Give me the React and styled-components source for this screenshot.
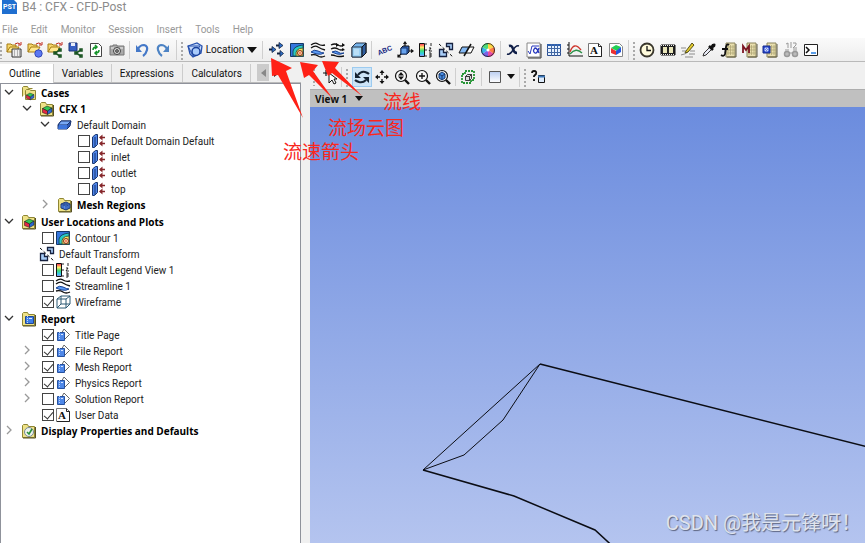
import React, {useState} from 'react';
import styled, {createGlobalStyle} from 'styled-components';

const GlobalStyle = createGlobalStyle`
    * { box-sizing: border-box; }
    html, body, #root { height: 100%; }
    body {
        margin: 0;
        overflow: hidden;
        background: #f0f0f0;
        color: #111;
        font-family: Roboto, "Noto Sans CJK SC", sans-serif;
        font-size: 10px;
    }
    button {
        border: 0;
        padding: 0;
        background: none;
        font: inherit;
        color: inherit;
    }
`;

const Window = styled.div`
    position: relative;
    display: flex;
    flex-direction: column;
    height: 100%;
    overflow: hidden;
`;
const TitleBar = styled.header`
    display: flex;
    align-items: center;
    gap: 5px;
    height: 20px;
    padding: 0 2px 6px;
    background: #fff;
`;
const Title = styled.h1`
    margin: 0;
    font: 400 12px/14px Roboto, sans-serif;
    color: #8c8c8c;
`;
const Menu = styled.nav`
    display: flex;
    gap: 13px;
    height: 18px;
    padding: 0 2px;
    background: #fff;
    color: #999;
`;
const Toolbar = styled.div`
    display: flex;
    align-items: center;
    height: 24px;
    background: linear-gradient(#fafafa, #ededed);
    border-bottom: 1px solid #b9b9b9;
`;
const ViewToolbar = styled(Toolbar)`
    height: 25px;
    padding-left: 3px;
    background: #f0f0f0;
    border: 0;
`;
const Handle = styled.span`
    width: 6px;
    height: 18px;
    flex: none;
    background: radial-gradient(circle at 1px 1px, #aaa 1px, transparent 1px) 0 1px / 3px 4px repeat-y;
`;
const ViewHandle = styled(Handle)`
    width: 10px;
`;
const EdgeHandle = styled(Handle)`
    width: 11px;
    height: 20px;
    margin-left: ${p => p.$gap}px;
    border-left: 1px solid #cfcfcf;
    background-position: 4px 2px;
`;
const Separator = styled.span`
    width: 1px;
    height: 18px;
    margin: 0 ${p => p.$gap || 4}px;
    flex: none;
    background: #cfcfcf;
`;
const Tools = styled.div`
    display: flex;
    justify-content: space-between;
    width: ${p => p.$width}px;
    flex: none;
`;
const Tool = styled.button`
    display: grid;
    place-items: center;
    width: 16px;
    height: 16px;
`;
const ActiveTool = styled(Tool)`
    width: 20px;
    height: 20px;
    margin-right: 2px;
    background: #cce4f7;
    outline: 1px solid #9ccbf0;
    outline-offset: -1px;
`;
const DropButton = styled.button`
    display: flex;
    align-items: center;
    justify-content: space-between;
    width: ${p => p.$width}px;
    height: 20px;
`;
const Caret = styled.span`
    border: solid transparent;
    border-width: ${p => p.$small ? '5px 4px 0' : '6px 5px 0'};
    border-top-color: #111;
`;
const Body = styled.div`
    display: grid;
    grid-template-columns: 301px minmax(0, 1fr);
    column-gap: 9px;
    flex: 1;
    min-height: 0;
    padding-top: 2px;
`;
const SidePanel = styled.aside`
    display: flex;
    flex-direction: column;
    min-height: 0;
`;
const Tabs = styled.div`
    display: flex;
    height: 19px;
    border-bottom: 1px solid #bbb;
`;
const Tab = styled.button`
    height: ${p => p.$active ? 19 : 18}px;
    flex: ${p => p.$grow} 0 0;
    background: ${p => p.$active ? '#fff' : '#efefef'};
    border-right: 1px solid #ccc;
    text-align: center;
    white-space: nowrap;
    padding-right: ${p => p.$active ? 4 : 0}px;
`;
const TabScroll = styled.button`
    display: grid;
    align-items: center;
    justify-content: ${p => p.$left ? 'center' : 'start'};
    width: ${p => p.$left ? 12 : 32}px;
    height: 17px;
    margin-left: ${p => p.$left ? 6 : 0}px;
    padding-left: ${p => p.$left ? 0 : 5}px;
    background: ${p => p.$left ? '#cbcbcb' : 'none'};
`;
const Tree = styled.div`
    display: flex;
    flex-direction: column;
    gap: 1px;
    flex: 1;
    padding-top: 1px;
    background: #fff;
    border: solid #8f929b;
    border-width: 1px 1px 0;
`;
const Row = styled.div`
    display: flex;
    align-items: center;
    height: 16px;
    padding-left: ${p => p.$level * 18}px;
    font-weight: ${p => p.$bold ? 700 : 400};
    font-family: ${p => p.$bold ? '"Open Sans", sans-serif' : 'inherit'};
    color: ${p => p.$bold ? '#000' : '#222'};
`;
const Twist = styled.button`
    display: grid;
    place-items: center;
    width: 20px;
    height: 16px;
    padding: 0 4px 2px 0;
`;
const NoTwist = styled.span`
    width: 20px;
`;
const Check = styled.input`
    appearance: none;
    display: grid;
    place-items: center;
    width: 12px;
    height: 12px;
    margin: 0 1px 0 3px;
    border: 1px solid #444;
    background: #fff;
    &:checked::after {
        content: "";
        width: 4px;
        height: 8px;
        margin-bottom: 2px;
        border: solid #333;
        border-width: 0 1px 1px 0;
        transform: rotate(40deg);
    }
`;
const Label = styled.label`
    display: flex;
    align-items: center;
    gap: 4px;
    white-space: nowrap;
`;
const ViewPanel = styled.main`
    display: flex;
    flex-direction: column;
    min-width: 0;
    min-height: 0;
`;
const ViewBar = styled.div`
    display: flex;
    align-items: center;
    height: 18px;
    padding-left: 5px;
    background: #c0c0c0;
    border-top: 1px solid #adadad;
`;
const ViewName = styled.button`
    display: flex;
    align-items: center;
    gap: 8px;
    font-weight: 700;
    font-family: "Open Sans", sans-serif;
`;
const Viewport = styled.div`
    flex: 1;
    min-height: 0;
    background: linear-gradient(#6b8cde, #b4c4ef);
`;
const Scene = styled.svg`
    display: block;
    width: 100%;
    height: 100%;
`;
const Arrows = styled.svg`
    position: absolute;
    left: 270px;
    top: 56px;
    pointer-events: none;
`;
const Note = styled.span`
    position: absolute;
    left: ${p => p.$x}px;
    top: ${p => p.$y}px;
    font: 19px/24px "Noto Sans CJK SC", sans-serif;
    color: #f8281e;
    white-space: nowrap;
`;
const Watermark = styled.span`
    position: absolute;
    right: 4px;
    bottom: 8px;
    font: 20px/24px Roboto, "Noto Sans CJK SC", sans-serif;
    color: #dfe3ec;
    text-shadow: 1px 1px 1px #5d6580;
    white-space: nowrap;
`;

const Icon = ({children}) => (
    <svg width="16" height="16" viewBox="0 0 16 16" overflow="visible" fill="none" stroke="#111" aria-hidden="true">{children}</svg>
);

// shared pieces
const openFolder = (
    <>
        <path d="M1 10V2h4l1 1h4v3" fill="#f5d76c" stroke="#a57b13" />
        <path d="M1 10l3-5h9l-3 5z" fill="#ffe88d" stroke="#a57b13" />
        <path d="M9 2q3-2 5 0M15 0v3h-3" stroke="#c0261c" />
    </>
);
const share = <path d="M8 11l5-3M8 11l5 3M7 10h2v2H7zM12 7h2v2h-2zM12 13h2v2h-2z" stroke="#17521f" strokeWidth="1.5" />;
const folder = (
    <>
        <path d="M1.5 14.5v-12l1-1h4l1 2h6v11z" fill="#eee287" stroke="#8f8634" />
        <path d="M2 15h12.5V4" stroke="#565023" />
    </>
);
const cube = (
    <g strokeWidth=".5">
        <path d="M3.5 7.5L8 5l5 2-4.5 3z" fill="#33c653" />
        <path d="M3.5 7.5v4l5 2V10z" fill="#e32844" />
        <path d="M8.5 10L13 7v4l-4.5 2.5z" fill="#2c66d0" />
    </g>
);
const calc = (
    <>
        <path d="M5 1h9v14H5z" fill="#e9dfae" stroke="#8b845c" />
        <path d="M7 3v10M9.5 3v10M12 3v10M6 5h8M6 8h8M6 11h8" stroke="#aaa070" strokeWidth=".7" />
        <path d="M15 2v13H6" stroke="#5d583e" />
    </>
);
const streams = (
    <>
        <path d="M1 3q4-3 7-1t7 1M1 6q4-3 7-1t7 3M1 13q4-1 7 1t7 0" strokeWidth="1.3" />
        <path d="M1 10q3-3 7-1t6 2q-3 2-7 1T1 10z" fill="#5b9bf5" stroke="#174090" />
    </>
);
const magnifier = (
    <>
        <circle cx="7" cy="7" r="5.5" fill="#f7f7f7" strokeWidth="1.2" />
        <path d="M11 11l4 4" strokeWidth="2.4" />
    </>
);

const icons = {
    loadCase: <>{openFolder}<path d="M6 7h9v8H6z" fill="#eee" stroke="#333" /><path d="M8 9h1M11 9h1M13 9h1M8 11h1M11 11h1M13 11h1M8 13h1M11 13h1M13 13h1" stroke="#777" /></>,
    loadResults: <>{openFolder}<circle cx="11.5" cy="11.5" r="3.7" fill="#5b78f2" stroke="#3348b5" /></>,
    loadState: <>{openFolder}{share}</>,
    saveState: <><path d="M1 1h8v8H1z" fill="#375fc4" stroke="#1d3576" /><path d="M3 1h4v3H3z" fill="#e7edfa" stroke="none" />{share}</>,
    refresh: <><path d="M2.5 1.5h8l3 3v10h-11z" fill="#fff" stroke="#444" /><path d="M5 8q0-3 3-3M7 3l2 2-2 2M11 8q0 3-3 3M9 9l-2 2 2 2" stroke="#159329" strokeWidth="1.5" /></>,
    camera: <><path d="M1 4h3V3h4v1h7v9H1z" fill="#aaa" stroke="#777" /><path d="M2 6h3M11 6h3" stroke="#eee" /><circle cx="8" cy="9" r="3.5" fill="#ddd" stroke="#444" /><circle cx="8" cy="9" r="1.5" fill="#777" stroke="#555" /></>,
    undo: <><path d="M4 7q2-4 6-4 4 1 3 5-1 4-4 6" stroke="#4478c8" strokeWidth="2.2" /><path d="M2 3v7h6z" fill="#4478c8" stroke="none" /></>,
    redo: <><path d="M12 7q-2-4-6-4-4 1-3 5 1 4 4 6" stroke="#4d83c4" strokeWidth="2.2" /><path d="M14 3v7H8z" fill="#4d83c4" stroke="none" /></>,
    location: <><path d="M1 4l9-3 5 3-1 7-8 4-3-3z" fill="#c4d9fb" stroke="#2852ae" strokeWidth="1.3" /><path d="M1 4h12l-7 10z" stroke="#2852ae" /><circle cx="9" cy="9.5" r="4" fill="#a9cbfb" stroke="#173f9b" strokeWidth="1.5" /></>,
    vector: <><path d="M1 7.5h4M8 3.5h4M9 11.5h4" stroke="#12223f" strokeWidth="2" /><path d="M4 4.5l4 3-4 3zM11 .5l4 3-4 3zM12 8.5l3.5 3-3.5 3z" fill="#2f6fc9" stroke="#12223f" strokeWidth=".8" /></>,
    contour: <><path d="M1.5 1.5h13v13h-13z" fill="#3577df" stroke="#153765" /><path d="M4 14V9q1-5 10-6v11z" fill="#26cac3" stroke="#164c63" /><path d="M7 14q-1-8 7-8v8z" fill="#f4e45f" stroke="#49623c" /><circle cx="11" cy="11" r="2.5" fill="#ffe0a5" stroke="#8b2b1e" /><circle cx="11" cy="11" r=".8" fill="#e12" stroke="none" /></>,
    streamline: streams,
    particle: <><path d="M1 3q4-2 7 0t6 0M1 7q4-2 7 0t6 0M1 13q3 0 5 1t8 0" strokeWidth="1.3" /><path d="M2 10q4-2 6 0t6 1q-4 2-7 1T2 10z" fill="#5b9bf5" stroke="#174090" /><path d="M12 1l3 2-3 2zM6 1l3 2-3 2zM12 6l3 2-3 1z" fill="#111" stroke="none" /></>,
    volume: <><path d="M1 5l4-4h10v10l-4 4H1z" fill="#77b5ec" stroke="#273449" /><path d="M1 5h10v10H1z" fill="#9bd0f4" stroke="#273449" /><path d="M11 5l4-4v10l-4 4z" fill="#315f9f" /><path d="M3 7h5v6H3z" fill="#badff7" stroke="none" /></>,
    text: <text x="1" y="11" transform="rotate(-22 8 8)" fontSize="7" fontWeight="700" fontFamily="Liberation Sans" fill="#182a84" stroke="none">ABC</text>,
    axes: <><path d="M8 5V0M11 9h5M5 11l-4 4M6.5 2L8 0l1.5 2M14 7.5L16 9l-2 1.5M1 12.5V15h3" strokeWidth="1.2" /><path d="M4 6l2-2h6v6l-2 2H4z" fill="#2d62bc" /><path d="M4 6h6v6H4z" fill="#67a2ed" stroke="#15356d" /></>,
    legend: <><defs><linearGradient id="rainbow" x2="0" y2="1"><stop stopColor="#f25" /><stop offset=".3" stopColor="#fe6" /><stop offset=".55" stopColor="#3ed875" /><stop offset=".8" stopColor="#31c9ee" /><stop offset="1" stopColor="#a8e" /></linearGradient></defs><path d="M1.5 1.5h5v13h-5z" fill="url(#rainbow)" /><path d="M7 2h2M7 8h2M7 14h2M13 1v3M11 6h2l-2 3h3M11 11h2v2h-2M13 13v2h-2" strokeWidth=".9" /></>,
    transform: <><path d="M1.5 7.5h4v3h3v4h-7z" fill="#a8cdf7" stroke="#17213f" strokeWidth="1.3" /><path d="M8.5 1.5h6v6h-3v-3h-3z" fill="#a8cdf7" stroke="#17213f" strokeWidth="1.3" /><path d="M1 2l14 13" strokeDasharray="3 2" /></>,
    clip: <><path d="M3 5h7l-3 6H0z" fill="#83b8f4" /><path d="M10 5h5l-3 6H7" fill="#fff" /><path d="M5 14l7-12" strokeWidth="1.5" /></>,
    color: <><g stroke="none"><path d="M8 8V1a7 7 0 0 1 6 4z" fill="#ffd743" /><path d="M8 8l6-3a7 7 0 0 1 0 7z" fill="#fb7a46" /><path d="M8 8l6 4a7 7 0 0 1-6 3z" fill="#e74aa5" /><path d="M8 8v7a7 7 0 0 1-6-3z" fill="#7863e6" /><path d="M8 8l-6 4a7 7 0 0 1 0-7z" fill="#38b5ec" /><path d="M8 8L2 5a7 7 0 0 1 6-4z" fill="#4edb78" /></g><circle cx="8" cy="8" r="6.5" strokeWidth=".8" /><circle cx="8" cy="8" r="1.5" fill="#fff" stroke="none" /></>,
    variable: <><path d="M4 4q3-1 4 3t4 4" stroke="#101f48" strokeWidth="2.5" /><path d="M14 4q-3-1-6 4t-6 4" stroke="#101f48" strokeWidth="1.5" /></>,
    expression: <><path d="M1 1h13v14H1z" fill="#fff" stroke="#888" /><path d="M15 2v14H2" stroke="#333" /><path d="M2 9l2 3 2-8h7" stroke="#2737bd" /><path d="M13 6q-2 6-4 5-3-2 0-5 2 0 4 5" stroke="#2737bd" strokeWidth="1.3" /></>,
    table: <><path d="M1.5 2.5h13v11h-13z" fill="#e7f2ff" stroke="#2b4d91" /><path d="M1 3h14" stroke="#2b5faf" strokeWidth="2" /><path d="M5.5 2v12M8.5 2v12M11.5 2v12M1 6.5h14M1 10.5h14" stroke="#4268a4" /></>,
    chart: <><path d="M2 0v14h14M0 3h2M0 7h2M0 11h2" /><path d="M3 10q4-11 11-2" stroke="#ce352b" strokeWidth="1.3" /><path d="M3 12q6-7 12-1" stroke="#2b9148" strokeWidth="1.3" /></>,
    comment: <><path d="M1.5 1.5h10l3 3v10h-13z" fill="#fff" stroke="#777" /><path d="M11.5 1.5v3h3v10H2" stroke="#222" /><text x="3" y="12" fontSize="11" fontWeight="700" fontFamily="Liberation Serif" fill="#111" stroke="none">A</text></>,
    figure: <><path d="M1.5 1.5h10l3 3v10h-13z" fill="#fff" stroke="#888" /><path d="M3 6l5-3 5 2-4 4z" fill="#20cf54" stroke="none" /><path d="M3 6l5 3v4l-5-2z" fill="#ea3030" stroke="none" /><path d="M8 9l5-4v5l-5 3z" fill="#2554dd" stroke="none" /></>,
    clock: <><circle cx="8" cy="8" r="6.5" fill="#fffbdc" stroke="#39362c" strokeWidth="1.8" /><path d="M8 4v4.5h4" strokeWidth="1.3" /></>,
    film: <><path d="M1 3h14v10H1z" fill="#222" /><path d="M3 5h4v6H3zM9 5h4v6H9z" fill="#e9e6ba" stroke="none" /><path d="M1 3.5h14M1 12.5h14" stroke="#eee" strokeDasharray="1 1" /></>,
    quick: <><path d="M1 13q5-1 7-3M5 15h8M9 12h6M10 9h5M2 9h4M1 6h5" stroke="#8b8b8b" /><path d="M6 9l6-8 2 2-6 7-3 1z" fill="#e5cc2d" stroke="#565118" /></>,
    probe: <><path d="M2 14l1-3 6-6 2 2-6 6z" fill="#e8eaf5" stroke="#333" /><path d="M8 4l4 4M10 6l2-3q2-1 1 1z" stroke="#111" strokeWidth="2.5" /></>,
    func: <>{calc}<path d="M8 3Q6 1 5 5L4 12q-1 3-4 1M1 7h6" strokeWidth="1.8" /></>,
    macro: <>{calc}<path d="M1 11V4l3 4 3-4v7" stroke="#7c1523" strokeWidth="1.8" /></>,
    mesh: <>{calc}<path d="M1 4h7v7H1z" fill="#2748ce" stroke="#172b8b" /><path d="M3 6h3v3H3zM3 6l3 3M6 6L3 9" stroke="#dbe5ff" strokeWidth=".8" /></>,
    compare: <g stroke="#999"><path d="M3 2l2-1v5M10 1h3v2l-3 3h4M8 0v6" /><circle cx="4" cy="12" r="2.5" fill="#bbb" strokeWidth="1.5" /><circle cx="12" cy="12" r="2.5" fill="#bbb" strokeWidth="1.5" /><path d="M2 8h4M10 8h4M6 11h4" /></g>,
    command: <><path d="M1.5 2.5h13v11h-13z" fill="#fff" stroke="#222" /><path d="M3 5l3 3-3 3" strokeWidth="1.5" /><path d="M8 11h5" stroke="#247ee0" strokeWidth="1.5" /></>,
    pick: <><path d="M0 4h6M3 1v6" strokeWidth="1.2" /><path d="M6 4v10l3-3 2 4 2-1-2-4h3z" fill="#fff" /></>,
    rotate: <><path d="M4 6q3-4 7-3 3 1 4 2M12 11q-3 3-7 2-3-1-4-2" stroke="#152332" strokeWidth="2" /><path d="M1 3v6h6zM15 14V8H9z" fill="#152332" stroke="none" /></>,
    pan: <><path d="M8 3v3M8 10v3M3 8h3M10 8h3" strokeWidth="1.3" /><path d="M5.5 4L8 1l2.5 3zM5.5 12L8 15l2.5-3zM4 5.5L1 8l3 2.5zM12 5.5L15 8l-3 2.5z" fill="#111" stroke="none" /></>,
    zoom: <>{magnifier}<path d="M4 6.5L7 3l3 3.5zM4 7.5L7 11l3-3.5z" fill="#111" stroke="none" /></>,
    zoomBox: <>{magnifier}<path d="M4 7h6M7 4v6" strokeWidth="1.3" /></>,
    fit: <>{magnifier}<path d="M4 5l3-2 3 2v4l-3 2-3-2z" fill="#458be1" stroke="#17386e" /><path d="M4 5l3 2 3-2M7 7v4" stroke="#17386e" /></>,
    highlight: <><path d="M2 5h3V2h9v9h-3v3H2z" stroke="#259535" strokeWidth="1.8" strokeDasharray="2 1" /><path d="M5.5 7.5l2-2h4v4l-2 2h-4zM5.5 7.5h4v4M9.5 7.5l2-2" fill="#ddd" strokeWidth=".8" /></>,
    background: <><defs><linearGradient id="sheet" x2="0" y2="1"><stop stopColor="#b9cdf1" /><stop offset="1" stopColor="#fff" /></linearGradient></defs><path d="M2.5 2.5h11v11h-11z" fill="url(#sheet)" stroke="#555" /></>,
    help: <><path d="M2 4q0-2 2-2 3 0 2 3L4 7v1M4 10v2" strokeWidth="1.8" /><path d="M8.5 6.5h6v7h-6z" fill="#dceafa" /><path d="M8 7.5h7" stroke="#3b75b7" strokeWidth="2" /></>,
    folderStack: <><path d="M1.5 11.5v-9l1-1h4l1 2h4" fill="#eee287" stroke="#8f8634" /><path d="M4.5 14.5v-9l1-1h3l1 1h5v9z" fill="#eee287" stroke="#8f8634" /><g transform="translate(2.5 4) scale(.8)">{cube}</g></>,
    folderCube: <>{folder}{cube}</>,
    folderMesh: <>{folder}<path d="M4 7l5-2 4 2v4l-4 2-5-2z" fill="#5187e5" stroke="#1c3774" /><path d="M4 7l5 2 4-2M9 9v4M6 6l5 2v4M11 6L6 8v4" stroke="#1c3774" strokeWidth=".6" /></>,
    folderReport: <>{folder}<path d="M4.5 5.5h8v7h-8z" fill="#3d7ee8" stroke="#1e4696" /><path d="M6.5 5v7" stroke="#cde" strokeDasharray="1 1" /><path d="M8 7.5h3" stroke="#d9e8ff" /></>,
    folderCheck: <>{folder}<circle cx="8" cy="9" r="4.5" fill="#edf3ed" stroke="#789" /><path d="M6 9l2 2 3-5" stroke="#28903a" strokeWidth="1.6" /></>,
    domain: <><path d="M1 8l3-4h10l-1 5-3 3H1z" fill="#2d5ab8" stroke="#1a3471" /><path d="M1 8l3-4h10l-4 4z" fill="#78a8f4" stroke="#1a3471" /><path d="M2 8h8v4H1z" fill="#3e76dd" stroke="none" /></>,
    boundary: <><path d="M1.5 4l3-2.5h2v10l-3 3h-2z" fill="#4d84ea" stroke="#19366f" /><path d="M4 4v10" stroke="#19366f" /><path d="M9 4.5h5M9 10.5h5" stroke="#86262a" strokeWidth="1.3" /><path d="M8 4.5L11.5 1.5v6zM8 10.5l3.5-3v6z" fill="#86262a" stroke="none" /></>,
    wireframe: <path d="M2 5l4-3h9v8l-4 4H2zM2 5h9v9M11 5l4-3M6 2v8h9M6 10l-4 4" stroke="#2c5b74" />,
    page: <><path d="M9 2l5.5 5.5L9 13 5 9z" fill="#fff" stroke="#666" /><path d="M2.5 5.5h7v8h-7z" fill="#4f88e8" stroke="#26519f" /><path d="M4.5 5v8" stroke="#b9d2fa" strokeDasharray="1 1" /><path d="M6 7.5h2" stroke="#d9e8ff" /></>,
};

const ToolGroup = ({names, width}) => (
    <Tools $width={width}>
        {names.map(name => (
            <Tool key={name} type="button" aria-label={name}><Icon>{icons[name]}</Icon></Tool>
        ))}
    </Tools>
);

const sections = [
    [
        {level: 0, twist: 'open', icon: 'folderStack', text: 'Cases', bold: true},
        {level: 1, twist: 'open', icon: 'folderCube', text: 'CFX 1', bold: true},
        {level: 2, twist: 'open', icon: 'domain', text: 'Default Domain'},
        {level: 3, check: false, icon: 'boundary', text: 'Default Domain Default'},
        {level: 3, check: false, icon: 'boundary', text: 'inlet'},
        {level: 3, check: false, icon: 'boundary', text: 'outlet'},
        {level: 3, check: false, icon: 'boundary', text: 'top'},
        {level: 2, twist: 'closed', icon: 'folderMesh', text: 'Mesh Regions', bold: true},
    ],
    [
        {level: 0, twist: 'open', icon: 'folderCube', text: 'User Locations and Plots', bold: true},
        {level: 1, check: false, icon: 'contour', text: 'Contour 1'},
        {level: 1, icon: 'transform', text: 'Default Transform'},
        {level: 1, check: false, icon: 'legend', text: 'Default Legend View 1'},
        {level: 1, check: false, icon: 'streamline', text: 'Streamline 1'},
        {level: 1, check: true, icon: 'wireframe', text: 'Wireframe'},
    ],
    [
        {level: 0, twist: 'open', icon: 'folderReport', text: 'Report', bold: true},
        {level: 1, check: true, icon: 'page', text: 'Title Page'},
        {level: 1, twist: 'closed', check: true, icon: 'page', text: 'File Report'},
        {level: 1, twist: 'closed', check: true, icon: 'page', text: 'Mesh Report'},
        {level: 1, twist: 'closed', check: true, icon: 'page', text: 'Physics Report'},
        {level: 1, twist: 'closed', check: false, icon: 'page', text: 'Solution Report'},
        {level: 1, check: true, icon: 'comment', text: 'User Data'},
        {level: 0, twist: 'closed', icon: 'folderCheck', text: 'Display Properties and Defaults', bold: true},
    ],
];

const TreeRow = ({item}) => {
    const {level, twist, check, icon, text, bold} = item;
    const [checked, setChecked] = useState(check);
    const id = 'node-' + text.replace(/ /g, '-');
    const content = <><Icon>{icons[icon]}</Icon>{text}</>;
    return (
        <Row $level={level} $bold={bold}>
            {twist ? (
                <Twist type="button" aria-label={text} aria-expanded={twist === 'open'}>
                    <svg width="10" height="10" viewBox="0 0 10 10" fill="none" stroke={twist === 'open' ? '#333' : '#999'} strokeWidth="1.3">
                        <path d={twist === 'open' ? 'M1 3l4 4 4-4' : 'M3 1l4 4-4 4'} />
                    </svg>
                </Twist>
            ) : <NoTwist />}
            {check !== undefined && (
                <Check id={id} type="checkbox" checked={checked} onChange={() => setChecked(!checked)} />
            )}
            {check !== undefined ? <Label htmlFor={id}>{content}</Label> : <Label as="span">{content}</Label>}
        </Row>
    );
};

const App = () => (
    <>
        <GlobalStyle />
        <Window>
            <TitleBar>
                <svg width="15" height="14" viewBox="0 0 15 14" aria-hidden="true">
                    <path d="M0 0h12l3 3v11H0z" fill="#1f6fd0" />
                    <text x="1" y="9" fontSize="7" fontWeight="700" fontFamily="Roboto" fill="#fff">PST</text>
                </svg>
                <Title>B4 : CFX - CFD-Post</Title>
            </TitleBar>
            <Menu>
                {['File', 'Edit', 'Monitor', 'Session', 'Insert', 'Tools', 'Help'].map(name => (
                    <button key={name} type="button">{name}</button>
                ))}
            </Menu>
            <Toolbar>
                <Handle />
                <ToolGroup width={119} names={['loadCase', 'loadResults', 'loadState', 'saveState', 'refresh', 'camera']} />
                <Separator />
                <ToolGroup width={37} names={['undo', 'redo']} />
                <EdgeHandle $gap={5} />
                <DropButton type="button" aria-haspopup="menu" $width={70}>
                    <Icon>{icons.location}</Icon>
                    Location
                    <Caret />
                </DropButton>
                <Separator $gap={5} />
                <ToolGroup width={99} names={['vector', 'contour', 'streamline', 'particle', 'volume']} />
                <Separator />
                <ToolGroup width={120} names={['text', 'axes', 'legend', 'transform', 'clip', 'color']} />
                <Separator />
                <ToolGroup width={119} names={['variable', 'expression', 'table', 'chart', 'comment', 'figure']} />
                <EdgeHandle $gap={4} />
                <ToolGroup width={180} names={['clock', 'film', 'quick', 'probe', 'func', 'macro', 'mesh', 'compare', 'command']} />
            </Toolbar>
            <Body>
                <SidePanel>
                    <Tabs role="tablist">
                        <Tab type="button" role="tab" aria-selected="true" $active $grow={51}>Outline</Tab>
                        <Tab type="button" role="tab" aria-selected="false" $grow={58}>Variables</Tab>
                        <Tab type="button" role="tab" aria-selected="false" $grow={73}>Expressions</Tab>
                        <Tab type="button" role="tab" aria-selected="false" $grow={69}>Calculators</Tab>
                        <TabScroll type="button" aria-label="Scroll left" $left>
                            <svg width="5" height="8"><path d="M5 0v8L0 4z" fill="#888" /></svg>
                        </TabScroll>
                        <TabScroll type="button" aria-label="Scroll right">
                            <svg width="5" height="8"><path d="M0 0v8l5-4z" fill="#111" /></svg>
                        </TabScroll>
                    </Tabs>
                    <Tree>
                        {sections.map(rows => (
                            <div key={rows[0].text}>
                                {rows.map(item => <TreeRow key={item.text} item={item} />)}
                            </div>
                        ))}
                    </Tree>
                </SidePanel>
                <ViewPanel>
                    <ViewToolbar>
                        <ViewHandle />
                        <ToolGroup width={16} names={['pick']} />
                        <EdgeHandle $gap={2} />
                        <ActiveTool type="button" aria-label="rotate" aria-pressed="true"><Icon>{icons.rotate}</Icon></ActiveTool>
                        <ToolGroup width={77} names={['pan', 'zoom', 'zoomBox', 'fit']} />
                        <Separator />
                        <ToolGroup width={16} names={['highlight']} />
                        <Separator $gap={5} />
                        <DropButton type="button" aria-label="background" $width={28}>
                            <Icon>{icons.background}</Icon>
                            <Caret $small />
                        </DropButton>
                        <EdgeHandle $gap={4} />
                        <ToolGroup width={16} names={['help']} />
                    </ViewToolbar>
                    <ViewBar>
                        <ViewName type="button">View 1 <Caret $small /></ViewName>
                    </ViewBar>
                    <Viewport>
                        <Scene role="img" aria-label="Wireframe">
                            <g fill="none" stroke="#0b0d14">
                                <path d="M113 363L230 257 193 313 154 348z" strokeWidth="1" />
                                <path d="M230 257L700 376M113 363l91 26 81 34 120 110" strokeWidth="1.5" />
                            </g>
                        </Scene>
                    </Viewport>
                </ViewPanel>
            </Body>
            <Arrows width="100" height="64" viewBox="270 56 100 64" fill="#ff2116">
                <path d="M271 58l21 10-6 3 17 47-25-43-6 1z" />
                <path d="M300 62l18 3-5 6 20 28-24-24-5 3z" />
                <path d="M322 61l17 1-4 6 27 28-30-23-4 3z" />
            </Arrows>
            <Note $x={383} $y={89}>流线</Note>
            <Note $x={328} $y={115}>流场云图</Note>
            <Note $x={283} $y={139}>流速箭头</Note>
            <Watermark>CSDN @我是元锋呀！</Watermark>
        </Window>
    </>
);

export default App;
